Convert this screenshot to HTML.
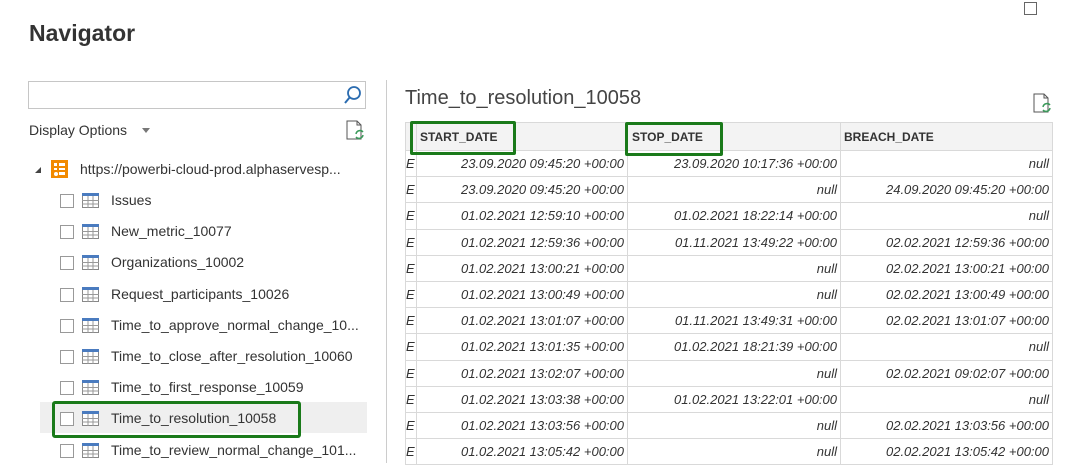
<!DOCTYPE html>
<html><head><meta charset="utf-8"><style>
body{margin:0;width:1077px;height:463px;background:#fff;position:relative;overflow:hidden;font-family:"Liberation Sans",sans-serif;color:#333}
.a{position:absolute}
.item{position:absolute;left:60px;height:20px;font-size:14px;color:#333;white-space:nowrap}
.cb{position:absolute;left:0;top:3px;width:12px;height:12px;border:1px solid #999;background:#fff}
.ti{position:absolute;left:22px;top:2px}
.lbl{position:absolute;left:51px;top:1px}
table{border-collapse:collapse;font-size:13px}
td{border:1px solid #d9d9d9;height:25.2px;padding:0 3px;text-align:right;font-style:italic;color:#333;white-space:nowrap}
th{border:1px solid #d9d9d9;height:27px;background:#f3f3f3;text-align:left;font-weight:bold;font-size:12px;padding:0 3px;color:#333}
</style></head><body>
<div class="a" style="left:29px;top:20px;font-size:23px;font-weight:bold;color:#333">Navigator</div>
<div class="a" style="left:1024px;top:2px;width:11px;height:11px;border:1px solid #666"></div>
<div class="a" style="left:28px;top:81px;width:336px;height:26px;border:1px solid #c6c6c6"></div>
<svg class="a" style="left:343px;top:85px" width="20" height="20"><circle cx="11" cy="8" r="6" fill="none" stroke="#2b6cb0" stroke-width="1.8"/><line x1="7" y1="12" x2="2" y2="18" stroke="#2b6cb0" stroke-width="2"/></svg>
<div class="a" style="left:29px;top:122px;font-size:14px">Display Options</div>
<div class="a" style="left:142px;top:128px;border:4px solid transparent;border-top:5px solid #777"></div>
<svg class="a" style="left:346px;top:120px" width="20" height="20"><path d="M1 1h10l4 4v14H1z" fill="#fff" stroke="#555"/><path d="M11 1v4h4" fill="none" stroke="#555"/><path d="M10 14a4 4 0 0 1 7-2M17 15a4 4 0 0 1-7 2" fill="none" stroke="#3a9a5a" stroke-width="1.5"/></svg>
<div class="a" style="left:35px;top:167px;border-left:6px solid transparent;border-bottom:6px solid #444"></div>
<svg class="a" style="left:51px;top:160px" width="17" height="18"><rect width="17" height="18" fill="#f28a00"/><rect x="3" y="3" width="3" height="3" fill="#fff"/><rect x="8" y="3" width="6" height="3" fill="#fff"/><rect x="3" y="8" width="3" height="2" fill="#fff"/><rect x="8" y="8" width="6" height="2" fill="#fff"/><circle cx="5" cy="14" r="2" fill="#fff"/><rect x="8" y="12" width="6" height="3" fill="#fff"/></svg>
<div class="a" style="left:80px;top:161px;font-size:14px">https://powerbi-cloud-prod.alphaservesp...</div>
<div class="a" style="left:40px;top:402px;width:327px;height:31px;background:#efefef"></div>
<div class="a" style="left:52px;top:401px;width:243px;height:31px;border:3px solid #1a7a1a;border-radius:3px"></div>
<div id="tree"></div>
<div class="a" style="left:386px;top:80px;width:1px;height:383px;background:#ccc"></div>
<div class="a" style="left:405px;top:87px;font-size:20px;color:#444">Time_to_resolution_10058</div>
<svg class="a" style="left:1033px;top:93px" width="20" height="20"><path d="M1 1h10l4 4v14H1z" fill="#fff" stroke="#555"/><path d="M11 1v4h4" fill="none" stroke="#555"/><path d="M10 14a4 4 0 0 1 7-2M17 15a4 4 0 0 1-7 2" fill="none" stroke="#3a9a5a" stroke-width="1.5"/></svg>
<table class="a" style="left:405px;top:122px">
<colgroup><col style="width:11px"><col style="width:211px"><col style="width:213px"><col style="width:212px"></colgroup>
<tr><th style="padding:0"></th><th>START_DATE</th><th style="padding-left:4px">STOP_DATE</th><th>BREACH_DATE</th></tr>
<tbody id="rows"></tbody></table>
<div class="a" style="left:410px;top:121px;width:100px;height:28px;border:3px solid #1a7a1a;border-radius:2px"></div>
<div class="a" style="left:625px;top:122px;width:92px;height:28px;border:3px solid #1a7a1a;border-radius:2px"></div>
<script>
var names=["Issues","New_metric_10077","Organizations_10002","Request_participants_10026","Time_to_approve_normal_change_10...","Time_to_close_after_resolution_10060","Time_to_first_response_10059","Time_to_resolution_10058","Time_to_review_normal_change_101..."];
var h="";names.forEach(function(n,i){h+='<div class="item" style="top:'+(191+i*31.2)+'px"><div class="cb"></div><svg class="ti" width="17" height="15"><rect x="0.5" y="0.5" width="16" height="14" fill="#fff" stroke="#888"/><rect x="0" y="0" width="17" height="3" fill="#4a7bbf"/><path d="M0 7.5h17M0 11h17M6 3v12M11 3v12" stroke="#999"/></svg><span class="lbl">'+n+'</span></div>'});
document.getElementById("tree").innerHTML=h;
var d=[["23.09.2020 09:45:20 +00:00","23.09.2020 10:17:36 +00:00","null"],["23.09.2020 09:45:20 +00:00","null","24.09.2020 09:45:20 +00:00"],["01.02.2021 12:59:10 +00:00","01.02.2021 18:22:14 +00:00","null"],["01.02.2021 12:59:36 +00:00","01.11.2021 13:49:22 +00:00","02.02.2021 12:59:36 +00:00"],["01.02.2021 13:00:21 +00:00","null","02.02.2021 13:00:21 +00:00"],["01.02.2021 13:00:49 +00:00","null","02.02.2021 13:00:49 +00:00"],["01.02.2021 13:01:07 +00:00","01.11.2021 13:49:31 +00:00","02.02.2021 13:01:07 +00:00"],["01.02.2021 13:01:35 +00:00","01.02.2021 18:21:39 +00:00","null"],["01.02.2021 13:02:07 +00:00","null","02.02.2021 09:02:07 +00:00"],["01.02.2021 13:03:38 +00:00","01.02.2021 13:22:01 +00:00","null"],["01.02.2021 13:03:56 +00:00","null","02.02.2021 13:03:56 +00:00"],["01.02.2021 13:05:42 +00:00","null","02.02.2021 13:05:42 +00:00"]];
var r="";d.forEach(function(x){r+='<tr><td style="padding:0;text-align:left">E</td><td>'+x[0]+'</td><td>'+x[1]+'</td><td>'+x[2]+'</td></tr>'});
document.getElementById("rows").innerHTML=r;
</script>
</body></html>
